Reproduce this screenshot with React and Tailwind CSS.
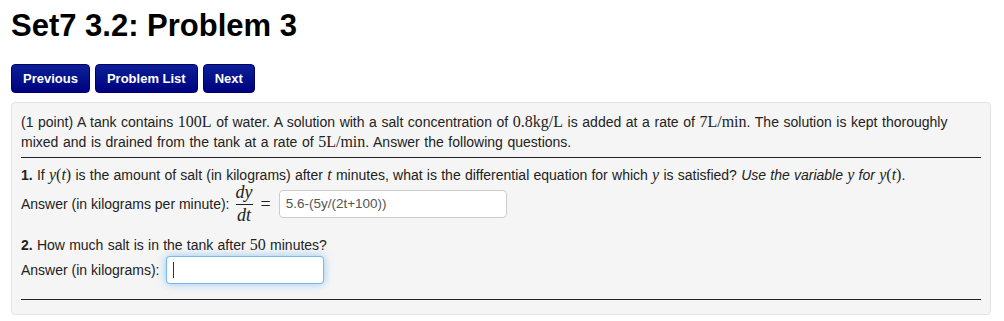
import React from "react";

const M = ({ children, i }) => (
  <span
    className={`text-[16px] ${i ? "italic" : ""}`}
    style={{ fontFamily: '"Liberation Serif", "Times New Roman", serif' }}
  >
    {children}
  </span>
);

const Yt = () => (
  <M>
    <span className="italic">y</span>(<span className="italic">t</span>)
  </M>
);

function Btn({ children }) {
  return (
    <button className="h-[29px] px-[11px] rounded-[4px] border border-[#000066] bg-gradient-to-b from-[#0d1f96] to-[#000080] text-white text-[13px] font-bold leading-[17px]">
      {children}
    </button>
  );
}

export default function App() {
  return (
    <div
      className="w-[1004px] h-[321px] bg-white text-[#222] overflow-hidden"
      style={{ fontFamily: '"Liberation Sans", Arial, Helvetica, sans-serif' }}
    >
      <h1 className="ml-[11px] mt-[8px] h-[36px] text-[31px] leading-[36px] font-bold text-black">
        Set7 3.2: Problem 3
      </h1>
      <div className="ml-[11px] mt-[20px] flex gap-[5px]">
        <Btn>Previous</Btn>
        <Btn>Problem List</Btn>
        <Btn>Next</Btn>
      </div>
      <div className="ml-[11px] mt-[9px] w-[980px] h-[213px] bg-[#f5f5f5] border border-[#e3e3e3] rounded-[4px] px-[9px] pt-[9px] text-[14px] leading-[20px]">
        <p className="[word-spacing:0.7px] whitespace-nowrap">
          (1 point) A tank contains <M>100L</M> of water. A solution with a salt concentration of{" "}
          <M>0.8kg/L</M> is added at a rate of <M>7L/min</M>. The solution is kept thoroughly
          <br />
          mixed and is drained from the tank at a rate of <M>5L/min</M>. Answer the following
          questions.
        </p>
        <div className="mt-[5px] h-px bg-[#222]" />
        <p className="mt-[7px] [word-spacing:0.35px] whitespace-nowrap">
          <b>1.</b> If <Yt /> is the amount of salt (in kilograms) after <M i>t</M> minutes, what is
          the differential equation for which <M i>y</M> is satisfied?{" "}
          <i>Use the variable </i>
          <M i>y</M>
          <i> for </i>
          <Yt />.
        </p>
        <div className="h-[38px] flex items-center">
          <span>Answer (in kilograms per minute):</span>
          <span
            className="ml-[6px] inline-flex flex-col items-center w-[17px] text-[18px] italic"
            style={{ fontFamily: '"Liberation Serif", "Times New Roman", serif' }}
          >
            <span className="leading-[15px]">dy</span>
            <span className="w-[17px] h-px bg-[#222] mt-[4px] mb-[2px]" />
            <span className="leading-[16px]">dt</span>
          </span>
          <span
            className="ml-[8px] text-[18px] leading-[20px]"
            style={{ fontFamily: '"Liberation Serif", "Times New Roman", serif' }}
          >
            =
          </span>
          <div className="ml-[8px] w-[228px] h-[28px] bg-white border border-[#cccccc] rounded-[4px] pl-[6px] flex items-center text-[#555] text-[13.5px]">
            5.6-(5y/(2t+100))
          </div>
        </div>
        <p className="mt-[12px] [word-spacing:0.35px]">
          <b>2.</b> How much salt is in the tank after <M>50</M> minutes?
        </p>
        <div className="mt-[1px] h-[28px] flex items-center">
          <span>Answer (in kilograms):</span>
          <div className="ml-[7px] w-[158px] h-[28px] bg-white border border-[rgba(82,168,236,0.8)] rounded-[4px] shadow-[0_0_8px_rgba(82,168,236,0.6)] pl-[6px] flex items-center">
            <span className="w-px h-[16px] bg-[#333]" />
          </div>
        </div>
        <div className="mt-[15px] h-px bg-[#222]" />
      </div>
    </div>
  );
}
